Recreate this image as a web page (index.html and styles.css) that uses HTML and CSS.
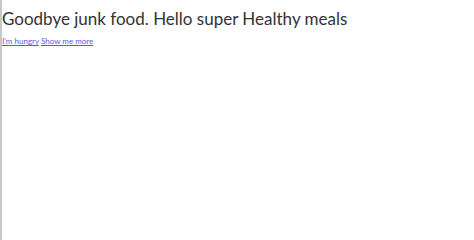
FILE: index.html
```html
<!DOCTYPE html>
<html>
<head>
<meta charset="utf-8">
<link rel="stylesheet" href="styles.css">
</head>
<body>
<div class="page">
  <h1 class="title">Goodbye junk food. Hello super Healthy meals</h1>
  <div class="links"><a href="#">I'm hungry</a> <a href="#">Show me more</a></div>
</div>
</body>
</html>
```
FILE: styles.css
```css
html, body { margin: 0; padding: 0; height: 100%; }
body { font-family: Lato, "Noto Sans", sans-serif; background: #fff; }
.page { box-sizing: border-box; min-height: 100%; border-left: 2px solid #c8c8c8; padding-top: 9px; }
.title { margin: 0; font-size: 17px; font-weight: 400; color: #333; line-height: 20px; }
.links { margin-top: 7px; font-size: 8px; line-height: 10px; }
.links a { color: #5a5ae0; }
```
